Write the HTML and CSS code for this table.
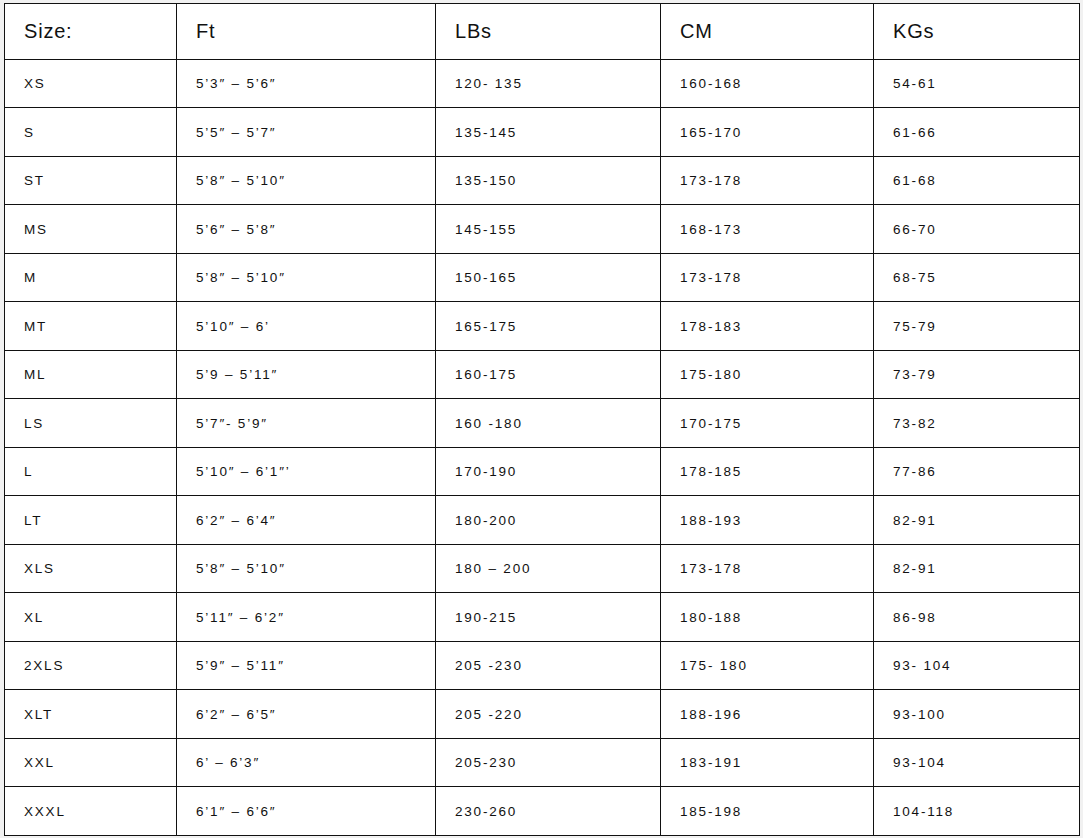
FILE: index.html
```html
<!DOCTYPE html>
<html lang="en">
<head>
<meta charset="utf-8">
<title>Size Chart</title>
<link rel="stylesheet" href="styles.css">
</head>
<body>
<div class="page">
<table class="chart">
<colgroup>
<col class="c-size"><col class="c-ft"><col class="c-lbs"><col class="c-cm"><col class="c-kg">
</colgroup>
<thead>
<tr><th>Size:</th><th>Ft</th><th>LBs</th><th>CM</th><th>KGs</th></tr>
</thead>
<tbody>
<tr><td>XS</td><td>5’3″ – 5’6″</td><td>120- 135</td><td>160-168</td><td>54-61</td></tr>
<tr><td>S</td><td>5’5″ – 5’7″</td><td>135-145</td><td>165-170</td><td>61-66</td></tr>
<tr><td>ST</td><td>5’8″ – 5’10″</td><td>135-150</td><td>173-178</td><td>61-68</td></tr>
<tr><td>MS</td><td>5’6″ – 5’8″</td><td>145-155</td><td>168-173</td><td>66-70</td></tr>
<tr><td>M</td><td>5’8″ – 5’10″</td><td>150-165</td><td>173-178</td><td>68-75</td></tr>
<tr><td>MT</td><td>5’10″ – 6’</td><td>165-175</td><td>178-183</td><td>75-79</td></tr>
<tr><td>ML</td><td>5’9 – 5’11″</td><td>160-175</td><td>175-180</td><td>73-79</td></tr>
<tr><td>LS</td><td>5’7″- 5’9″</td><td>160 -180</td><td>170-175</td><td>73-82</td></tr>
<tr><td>L</td><td>5’10″ – 6’1″’</td><td>170-190</td><td>178-185</td><td>77-86</td></tr>
<tr><td>LT</td><td>6’2″ – 6’4″</td><td>180-200</td><td>188-193</td><td>82-91</td></tr>
<tr><td>XLS</td><td>5’8″ – 5’10″</td><td>180 – 200</td><td>173-178</td><td>82-91</td></tr>
<tr><td>XL</td><td>5’11″ – 6’2″</td><td>190-215</td><td>180-188</td><td>86-98</td></tr>
<tr><td>2XLS</td><td>5’9″ – 5’11″</td><td>205 -230</td><td>175- 180</td><td>93- 104</td></tr>
<tr><td>XLT</td><td>6’2″ – 6’5″</td><td>205 -220</td><td>188-196</td><td>93-100</td></tr>
<tr><td>XXL</td><td>6’ – 6’3″</td><td>205-230</td><td>183-191</td><td>93-104</td></tr>
<tr><td>XXXL</td><td>6’1″ – 6’6″</td><td>230-260</td><td>185-198</td><td>104-118</td></tr>
</tbody>
</table>
</div>
</body>
</html>
```
FILE: styles.css
```css
html, body {
  margin: 0;
  padding: 0;
  background: #f1f1f1;
}

.page {
  padding: 3px 4px 2px 4px;
}

.chart {
  width: 1075px;
  table-layout: fixed;
  border-collapse: collapse;
  background: #ffffff;
  border: 1px solid #111111;
  font-family: "Liberation Sans", Arial, sans-serif;
  color: #111111;
}

.c-size { width: 172px; }
.c-ft { width: 259px; }
.c-lbs { width: 225px; }
.c-cm { width: 213px; }
.c-kg { width: 206px; }

.chart th,
.chart td {
  border: 1px solid #111111;
  padding: 0 0 0 19px;
  text-align: left;
  vertical-align: middle;
  white-space: nowrap;
}

.chart thead tr {
  height: 56px;
}

.chart th {
  font-size: 20px;
  font-weight: normal;
  letter-spacing: 0.8px;
}

.chart tbody tr:nth-child(odd) {
  height: 48px;
}

.chart tbody tr:nth-child(even) {
  height: 49px;
}

.chart td {
  font-size: 13.5px;
  letter-spacing: 1.8px;
}
```
